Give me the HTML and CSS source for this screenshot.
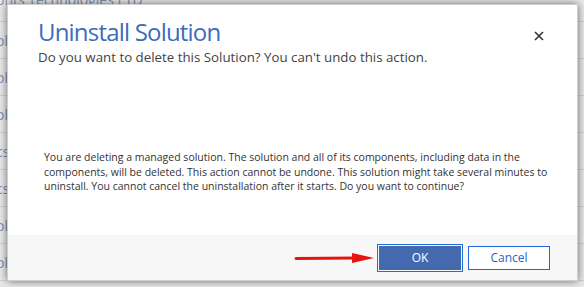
FILE: index.html
```html
<!DOCTYPE html>
<html lang="en">
<head>
    <meta charset="UTF-8">
    <title>Uninstall Solution</title>
    <link rel="stylesheet" href="styles.css">
</head>
<body>

    <!-- Page behind the dialog -->
    <div class="page">
        <div class="row first">onts Technologies LTD</div>
        <div class="row">ol</div>
        <div class="row">ol</div>
        <div class="row">ol</div>
        <div class="row">cs</div>
        <div class="row">cs</div>
        <div class="row">ol</div>
        <div class="row">ol</div>
    </div>

    <!-- Dialog -->
    <div class="dialog">
        <div class="dialog-header">
            <div class="titles">
                <h1 class="title">Uninstall Solution</h1>
                <p class="subtitle">Do you want to delete this Solution? You can't undo this action.</p>
            </div>
            <button class="close-button" aria-label="Close">
                <svg width="10" height="10" viewBox="0 0 10 10">
                    <path d="M1 1 L9 9 M9 1 L1 9" stroke="#333" stroke-width="1.6"/>
                </svg>
            </button>
        </div>
        <div class="dialog-body">
            <p>You are deleting a managed solution. The solution and all of its components, including data in the components, will be deleted. This action cannot be undone. This solution might take several minutes to uninstall. You cannot cancel the uninstallation after it starts. Do you want to continue?</p>
        </div>
        <div class="dialog-footer">
            <svg class="arrow" width="82" height="12" viewBox="0 0 82 12">
                <path d="M2 6.5 L62 6" stroke="#e8140f" stroke-width="3" stroke-linecap="round"/>
                <path d="M58 1 L80 6 L58 11 Z" fill="#e8140f"/>
            </svg>
            <button class="btn btn-primary">OK</button>
            <button class="btn btn-secondary">Cancel</button>
        </div>
    </div>

</body>
</html>
```

FILE: styles.css
```css
body {
    margin: 0;
    font-family: "Open Sans", "Noto Sans", sans-serif;
    background-color: #e9e9e9;
    overflow: hidden;
    height: 287px;
}
.row {
    height: 36px;
    border-bottom: 1px solid #d2d2d2;
    font-size: 14px;
    color: #7d8fb0;
    line-height: 37px;
    margin-left: -4px;
}
.row.first {
    height: 21px;
    line-height: 0px;
}
.dialog {
    position: absolute;
    left: 7px;
    top: 4px;
    width: 571px;
    height: 277px;
    background: white;
    box-shadow: 0 0 8px rgba(0, 0, 0, 0.55);
    border: 1px solid #cfcfcf;
    box-sizing: border-box;
    display: flex;
    flex-direction: column;
}
.dialog-header {
    display: flex;
    justify-content: space-between;
    padding: 12px 30px 0 30px;
}
.title {
    margin: 0;
    font-weight: normal;
    font-size: 24px;
    letter-spacing: -0.8px;
    line-height: 30px;
    color: #3d6cb9;
}
.subtitle {
    margin: 1px 0 0 0;
    font-size: 13.3px;
    color: #444;
}
.close-button {
    border: none;
    background: none;
    padding: 0;
    margin-top: 12px;
    margin-right: 3px;
    height: 12px;
}
.dialog-body {
    flex: 1;
    padding: 0 26px 0 36px;
    display: flex;
    align-items: center;
}
.dialog-body p {
    margin: 43px 0 0 0;
    font-size: 10.5px;
    line-height: 14.8px;
    color: #333;
}
.dialog-footer {
    height: 45px;
    background: #f7f7f7;
    display: flex;
    align-items: center;
    justify-content: flex-end;
    padding-right: 27px;
    gap: 5px;
}
.arrow {
    margin-right: -2px;
}
.btn {
    width: 82px;
    height: 24px;
    font-family: "Open Sans", sans-serif;
    font-size: 12px;
    box-sizing: border-box;
    cursor: pointer;
}
.btn-primary {
    background: #4469af;
    color: white;
    border: 1px solid #4469af;
    outline: 1px solid #1f6fd8;
    outline-offset: 1px;
    margin-right: 2px;
}
.btn-secondary {
    background: white;
    color: #2a64c9;
    border: 1px solid #2266dd;
}
```
